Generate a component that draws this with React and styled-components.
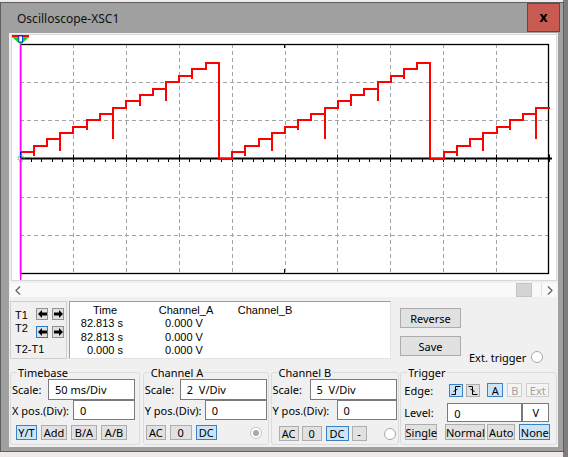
import React from 'react'
import styled, { createGlobalStyle } from 'styled-components'

const GlobalStyle = createGlobalStyle`
  html, body { margin: 0; padding: 0; }
  body {
    width: 568px;
    height: 457px;
    overflow: hidden;
    background: #f2eaea;
    font-family: "Noto Sans", "DejaVu Sans", sans-serif;
    font-size: 11px;
    color: #000;
  }
`

const Desktop = styled.div`
  width: 568px;
  height: 457px;
  padding-top: 2px;
  box-sizing: border-box;
  background: linear-gradient(to right, #f2eaea 0 563px, #7d7d7d 563px);
`

const Window = styled.div`
  width: 564px;
  height: 450px;
  box-sizing: border-box;
  border: 1px solid #5f5f5f;
  background: #a0a0a0;
  display: flex;
  flex-direction: column;
`

const TitleBar = styled.div`
  height: 30px;
  display: flex;
  align-items: flex-start;
  justify-content: space-between;
  padding: 0 3px 0 16px;
  flex-shrink: 0;
`

const Title = styled.span`
  line-height: 32px;
  font-size: 12px;
  color: #111;
`

const CloseBtn = styled.div`
  width: 33px;
  height: 29px;
  box-sizing: border-box;
  background: #c75a51;
  border: 1px solid #6a4440;
  display: flex;
  align-items: center;
  justify-content: center;
  font-weight: 700;
  font-size: 14px;
  line-height: 1;
  padding-bottom: 2px;
`

const Client = styled.div`
  margin: 0 5px 4px 8px;
  flex: 1;
  background: #f0f0f0;
  padding: 1px 1px 0 1px;
  display: flex;
  flex-direction: column;
`

const PlotPanel = styled.div`
  margin-left: 1px;
  height: 247px;
  box-sizing: border-box;
  border: 1px solid #d9d9d9;
  background: #fff;
  flex-shrink: 0;
`

const Scrollbar = styled.div`
  margin-top: 2px;
  height: 14px;
  display: flex;
  background: #f9f9f9;
  flex-shrink: 0;
`

const ScrollArrow = styled.div`
  width: 15px;
  display: flex;
  align-items: center;
  justify-content: center;
  border-left: ${p => (p.$right ? '1px solid #e2e2e2' : 'none')};
`

const ScrollTrack = styled.div`
  flex: 1;
  display: flex;
  justify-content: flex-end;
  padding-right: 9px;
`

const Thumb = styled.div`
  width: 16px;
  background: #d4d4d4;
  border: 1px solid #c4c4c4;
  box-sizing: border-box;
`

const TopRow = styled.div`
  margin-top: 4px;
  height: 58px;
  display: flex;
  align-items: flex-start;
  flex-shrink: 0;
`

const CursorPanel = styled.div`
  width: 57px;
  height: 58px;
  box-sizing: border-box;
  border: 1px solid #cfcfcf;
  padding: 6px 0 0 4px;
  display: flex;
`

const CursorLabels = styled.div`
  width: 21px;
  padding-top: 1px;
  display: flex;
  flex-direction: column;
  line-height: 13px;
  font-family: "Liberation Sans", Arial, sans-serif;
  font-size: 11px;
  white-space: nowrap;
`

const CursorLabel = styled.span`
  margin-top: ${p => p.$gap || 0}px;
`

const ArrowGrid = styled.div`
  display: grid;
  grid-template-columns: 12px 12px;
  grid-auto-rows: 12px;
  column-gap: 4px;
  row-gap: 6px;
`

const ArrowBtn = styled.div`
  box-sizing: border-box;
  border: 1px solid ${p => (p.$focus ? '#2a7bd0' : '#8f8f8f')};
  background: #e1e1e1;
  display: flex;
  align-items: center;
  justify-content: center;
`

const DataBox = styled.div`
  margin-left: 2px;
  width: 322px;
  height: 58px;
  box-sizing: border-box;
  border: 1px solid;
  border-color: #9c9c9c #e4e4e4 #e4e4e4 #9c9c9c;
  background: #fff;
  padding-top: 2px;
  display: grid;
  grid-template-columns: 70px 92px 66px;
  grid-auto-rows: 13.3px;
  line-height: 13.3px;
  font-family: "Liberation Sans", Arial, sans-serif;
  font-size: 11px;
`

const Cell = styled.span`
  text-align: ${p => p.$align || 'center'};
  padding-right: ${p => p.$pr || 0}px;
  white-space: nowrap;
`

const SideButtons = styled.div`
  margin: 7px 0 0 9px;
  display: flex;
  flex-direction: column;
  gap: 8px;
`

const PushBtn = styled.div`
  width: 61px;
  height: 20px;
  box-sizing: border-box;
  border: 1px solid #adadad;
  background: #e1e1e1;
  display: flex;
  align-items: center;
  justify-content: center;
  font-size: 11px;
`

const ExtTrigger = styled.div`
  align-self: flex-end;
  margin: 0 0 -5px 8px;
  display: flex;
  align-items: center;
  gap: 5px;
  height: 14px;
`

const Radio = styled.span`
  width: 12px;
  height: 12px;
  box-sizing: border-box;
  border-radius: 50%;
  border: 1px solid ${p => (p.$disabled ? '#c6c6c6' : '#a8a8a8')};
  background: #fff;
  display: flex;
  align-items: center;
  justify-content: center;
  flex-shrink: 0;
  &::after {
    content: '';
    display: ${p => (p.$checked ? 'block' : 'none')};
    width: 6px;
    height: 6px;
    border-radius: 50%;
    background: #a8a8a8;
  }
`

const GroupRow = styled.div`
  margin-top: 7px;
  height: 79px;
  display: flex;
  align-items: stretch;
  flex-shrink: 0;
`

const Group = styled.fieldset`
  margin: 0 0 0 ${p => p.$ml || 0}px;
  padding: 0 0 0 1px;
  width: ${p => p.$w}px;
  box-sizing: border-box;
  border: 1px solid #dcdcdc;
  border-radius: 3px;
  min-width: 0;
`

const GroupTitle = styled.legend`
  margin-left: 5px;
  padding: 0 1px;
  line-height: 13px;
  font-size: 11px;
`

const Field = styled.div`
  display: flex;
  align-items: center;
  height: ${p => p.$h}px;
  margin-top: ${p => p.$mt || 0}px;
  padding-left: ${p => p.$pl || 0}px;
`

const FieldLabel = styled.span`
  width: ${p => p.$w}px;
  flex-shrink: 0;
  white-space: nowrap;
  font-size: 11px;
`

const TextBox = styled.div`
  width: ${p => p.$w}px;
  height: 100%;
  box-sizing: border-box;
  border: 1px solid #7a7a7a;
  background: #fff;
  padding-left: ${p => (p.$center ? 0 : 6)}px;
  padding-top: ${p => p.$dy || 0}px;
  display: flex;
  align-items: center;
  justify-content: ${p => (p.$center ? 'center' : 'flex-start')};
  flex-shrink: 0;
  white-space: pre;
`

const BtnRow = styled.div`
  display: flex;
  align-items: center;
  height: ${p => p.$h || 15}px;
  margin-top: ${p => p.$mt || 5}px;
  padding-left: ${p => p.$pl || 0}px;
`

const ToggleBtn = styled.div`
  width: ${p => p.$w}px;
  height: ${p => p.$h || 15}px;
  margin-left: ${p => p.$ml || 0}px;
  box-sizing: border-box;
  border: 1px solid ${p => (p.$on ? '#3a82c4' : p.$off ? '#cfcfcf' : '#adadad')};
  background: ${p => (p.$on ? '#cce4f7' : p.$off ? '#f4f4f4' : '#e1e1e1')};
  color: ${p => (p.$off ? '#a3a3a3' : '#000')};
  display: flex;
  align-items: center;
  justify-content: center;
  font-size: 11px;
  flex-shrink: 0;
  white-space: nowrap;
`

const Spacer = styled.div`
  flex: 1;
`

/* ---------- plot ---------- */

const XL = 8
const XR = 537
const YT = 9
const YB = 238
const Y0 = 123.5
const DIVX = (XR - XL) / 10
const STEP = DIVX / 4
const UNIT = 6.36
const DEPTH = { 1: 4.4, 3: 11.5, 5: 3.4, 7: 25, 9: 4.6, 11: 11.5, 13: 3 }
const HLINES = [47.5, 85.5, 162.5, 200.5]

// 2px strokes centred on whole pixels stay crisp
const levelY = L => Math.round(Y0 - L * UNIT)
const stepX = i => Math.round(XL + 0.5 + i * STEP)

function wavePath() {
  let d = `M${XL + 0.5} ${levelY(1)}`
  let spikes = ''
  for (let i = 0; i < 40; i++) {
    const L = (i + 1) % 16
    const x2 = stepX(i + 1)
    d += ` H${x2}`
    if (i < 39) {
      const N = (i + 2) % 16
      d += ` V${levelY(N)}`
      if (DEPTH[L] && N === L + 1) {
        spikes += ` M${x2} ${levelY(N)} V${Math.round(levelY(L) + DEPTH[L])}`
      }
    }
  }
  return d + spikes
}

function ticks() {
  const out = []
  for (let k = 0; k <= 50; k++) {
    const x = Math.round(XL + (k * DIVX) / 5) + 0.5
    const major = k % 5 === 0
    out.push(<line key={k} x1={x} x2={x} y1={major ? Y0 - 4 : Y0} y2={Y0 + 3.5} stroke="#000" strokeWidth="1" />)
  }
  return out
}

const Plot = () => {
  const vx = []
  for (let k = 1; k < 10; k++) vx.push(Math.round(XL + k * DIVX) + 0.5)
  return (
    <svg width="544" height="245" viewBox="0 0 544 245" style={{ display: 'block' }}>
      {vx.map(x => (
        <line key={x} x1={x} x2={x} y1={YT} y2={YB} stroke="#a4a4a4" strokeDasharray="4 3" />
      ))}
      {HLINES.map(y => (
        <line key={y} x1={XL} x2={XR} y1={y} y2={y} stroke="#a4a4a4" strokeDasharray="4 3" />
      ))}
      <rect x={XL + 0.5} y={YT + 0.5} width={XR - XL - 1} height={YB - YT} fill="none" stroke="#000" strokeWidth="1.3" />
      <line x1={XL} x2={XR + 3} y1={Y0} y2={Y0} stroke="#000" strokeWidth="2" />
      {ticks()}
      <line x1="272.5" x2="272.5" y1={YT} y2={YT + 4} stroke="#000" />
      <line x1="272.5" x2="272.5" y1={YB - 4} y2={YB} stroke="#000" />
      <path d={wavePath()} fill="none" stroke="#ff0000" strokeWidth="2" />
      <line x1="8.7" x2="8.7" y1="3" y2="245" stroke="#ff00ff" strokeWidth="1.4" />
      <line x1="8.7" x2="8.7" y1="117" y2="123" stroke="#0000ff" strokeWidth="1.4" />
      <circle cx="9" cy="123.5" r="3" fill="none" stroke="#00c000" strokeDasharray="1.5 1" />
      <rect x="0" y="0" width="17" height="2.5" fill="#ff0000" />
      <polygon points="0.5,2.5 16.5,2.5 8.7,9.5" fill="#00e000" />
      <rect x="6.8" y="1" width="3.8" height="6" fill="#fff" stroke="#0000ff" strokeWidth="0.8" />
    </svg>
  )
}

const Arrow = ({ dir }) => (
  <svg width="9" height="8" viewBox="0 0 9 8">
    <polygon
      points={dir === 'left' ? '0,4 4,0 4,2.5 9,2.5 9,5.5 4,5.5 4,8' : '9,4 5,0 5,2.5 0,2.5 0,5.5 5,5.5 5,8'}
      fill="#000"
    />
  </svg>
)

const EdgeIcon = ({ rising }) => (
  <svg width="10" height="9" viewBox="0 0 10 9">
    <path d={rising ? 'M0.5 8.5 H4.5 V0.5 H9.5' : 'M0.5 0.5 H4.5 V8.5 H9.5'} fill="none" stroke="#000" strokeWidth="1" />
    <path d={rising ? 'M2.5 5.5 L6.5 3' : 'M2.5 3 L6.5 5.5'} fill="none" stroke="#000" strokeWidth="1" />
  </svg>
)

const Chevron = ({ right }) => (
  <svg width="6" height="9" viewBox="0 0 6 9">
    <path d={right ? 'M1 0.5 L5 4.5 L1 8.5' : 'M5 0.5 L1 4.5 L5 8.5'} fill="none" stroke="#606060" strokeWidth="1.2" />
  </svg>
)

const App = () => {
  return (
    <Desktop>
      <GlobalStyle />
      <Window>
        <TitleBar>
          <Title>Oscilloscope-XSC1</Title>
          <CloseBtn>x</CloseBtn>
        </TitleBar>
        <Client>
          <PlotPanel>
            <Plot />
          </PlotPanel>
          <Scrollbar>
            <ScrollArrow><Chevron /></ScrollArrow>
            <ScrollTrack>
              <Thumb />
            </ScrollTrack>
            <ScrollArrow $right><Chevron right /></ScrollArrow>
          </Scrollbar>

          <TopRow>
            <CursorPanel>
              <CursorLabels>
                <CursorLabel>T1</CursorLabel>
                <CursorLabel>T2</CursorLabel>
                <CursorLabel $gap={8}>T2-T1</CursorLabel>
              </CursorLabels>
              <ArrowGrid>
                <ArrowBtn><Arrow dir="left" /></ArrowBtn>
                <ArrowBtn><Arrow dir="right" /></ArrowBtn>
                <ArrowBtn $focus><Arrow dir="left" /></ArrowBtn>
                <ArrowBtn><Arrow dir="right" /></ArrowBtn>
              </ArrowGrid>
            </CursorPanel>
            <DataBox>
              <Cell>Time</Cell>
              <Cell>Channel_A</Cell>
              <Cell>Channel_B</Cell>
              <Cell $align="right" $pr={17}>82.813 s</Cell>
              <Cell $pr={4}>0.000 V</Cell>
              <Cell />
              <Cell $align="right" $pr={17}>82.813 s</Cell>
              <Cell $pr={4}>0.000 V</Cell>
              <Cell />
              <Cell $align="right" $pr={17}>0.000 s</Cell>
              <Cell $pr={4}>0.000 V</Cell>
              <Cell />
            </DataBox>
            <SideButtons>
              <PushBtn>Reverse</PushBtn>
              <PushBtn>Save</PushBtn>
            </SideButtons>
            <ExtTrigger>
              <span>Ext. trigger</span>
              <Radio />
            </ExtTrigger>
          </TopRow>

          <GroupRow>
            <Group $w={130}>
              <GroupTitle>Timebase</GroupTitle>
              <Field $h={21}>
                <FieldLabel $w={36}>Scale:</FieldLabel>
                <TextBox $w={87}>50 ms/Div</TextBox>
              </Field>
              <Field $h={20}>
                <FieldLabel $w={61}>X pos.(Div):</FieldLabel>
                <TextBox $w={62}>0</TextBox>
              </Field>
              <BtnRow $pl={4}>
                <ToggleBtn $w={21} $on>Y/T</ToggleBtn>
                <ToggleBtn $w={26} $ml={4}>Add</ToggleBtn>
                <ToggleBtn $w={26} $ml={4}>B/A</ToggleBtn>
                <ToggleBtn $w={26} $ml={4}>A/B</ToggleBtn>
              </BtnRow>
            </Group>

            <Group $w={126} $ml={3}>
              <GroupTitle>Channel A</GroupTitle>
              <Field $h={21}>
                <FieldLabel $w={35}>Scale:</FieldLabel>
                <TextBox $w={87}>{'2  V/Div'}</TextBox>
              </Field>
              <Field $h={20}>
                <FieldLabel $w={60}>Y pos.(Div):</FieldLabel>
                <TextBox $w={62}>0</TextBox>
              </Field>
              <BtnRow $pl={1}>
                <ToggleBtn $w={20}>AC</ToggleBtn>
                <ToggleBtn $w={22} $ml={4}>0</ToggleBtn>
                <ToggleBtn $w={21} $ml={4} $on>DC</ToggleBtn>
                <Spacer />
                <Radio $checked $disabled style={{ marginRight: 6 }} />
              </BtnRow>
            </Group>

            <Group $w={129} $ml={2}>
              <GroupTitle>Channel B</GroupTitle>
              <Field $h={21}>
                <FieldLabel $w={37}>Scale:</FieldLabel>
                <TextBox $w={87}>{'5  V/Div'}</TextBox>
              </Field>
              <Field $h={20}>
                <FieldLabel $w={64}>Y pos.(Div):</FieldLabel>
                <TextBox $w={60}>0</TextBox>
              </Field>
              <BtnRow $pl={6} $mt={6}>
                <ToggleBtn $w={20}>AC</ToggleBtn>
                <ToggleBtn $w={20} $ml={3}>0</ToggleBtn>
                <ToggleBtn $w={23} $ml={4} $on>DC</ToggleBtn>
                <ToggleBtn $w={15} $ml={3}>-</ToggleBtn>
                <Spacer />
                <Radio style={{ marginRight: 2 }} />
              </BtnRow>
            </Group>

            <Group $w={157} $ml={1}>
              <GroupTitle>Trigger</GroupTitle>
              <Field $h={22} $pl={2}>
                <FieldLabel $w={45}>Edge:</FieldLabel>
                <ToggleBtn $w={14} $h={13} $on><EdgeIcon rising /></ToggleBtn>
                <ToggleBtn $w={14} $h={13} $ml={3}><EdgeIcon /></ToggleBtn>
                <ToggleBtn $w={16} $h={14} $ml={7} $on>A</ToggleBtn>
                <ToggleBtn $w={15} $h={14} $ml={4} $off>B</ToggleBtn>
                <ToggleBtn $w={23} $h={14} $ml={4} $off>Ext</ToggleBtn>
              </Field>
              <Field $h={19} $mt={2} $pl={2}>
                <FieldLabel $w={43}>Level:</FieldLabel>
                <TextBox $w={75} $dy={2}>0</TextBox>
                <TextBox $w={27} $center>V</TextBox>
              </Field>
              <BtnRow $pl={3} $h={16} $mt={2}>
                <ToggleBtn $w={32} $h={16}>Single</ToggleBtn>
                <ToggleBtn $w={40} $h={16} $ml={8}>Normal</ToggleBtn>
                <ToggleBtn $w={28} $h={16} $ml={2}>Auto</ToggleBtn>
                <ToggleBtn $w={31} $h={16} $ml={4} $on>None</ToggleBtn>
              </BtnRow>
            </Group>
          </GroupRow>
        </Client>
      </Window>
    </Desktop>
  )
}

export default App
